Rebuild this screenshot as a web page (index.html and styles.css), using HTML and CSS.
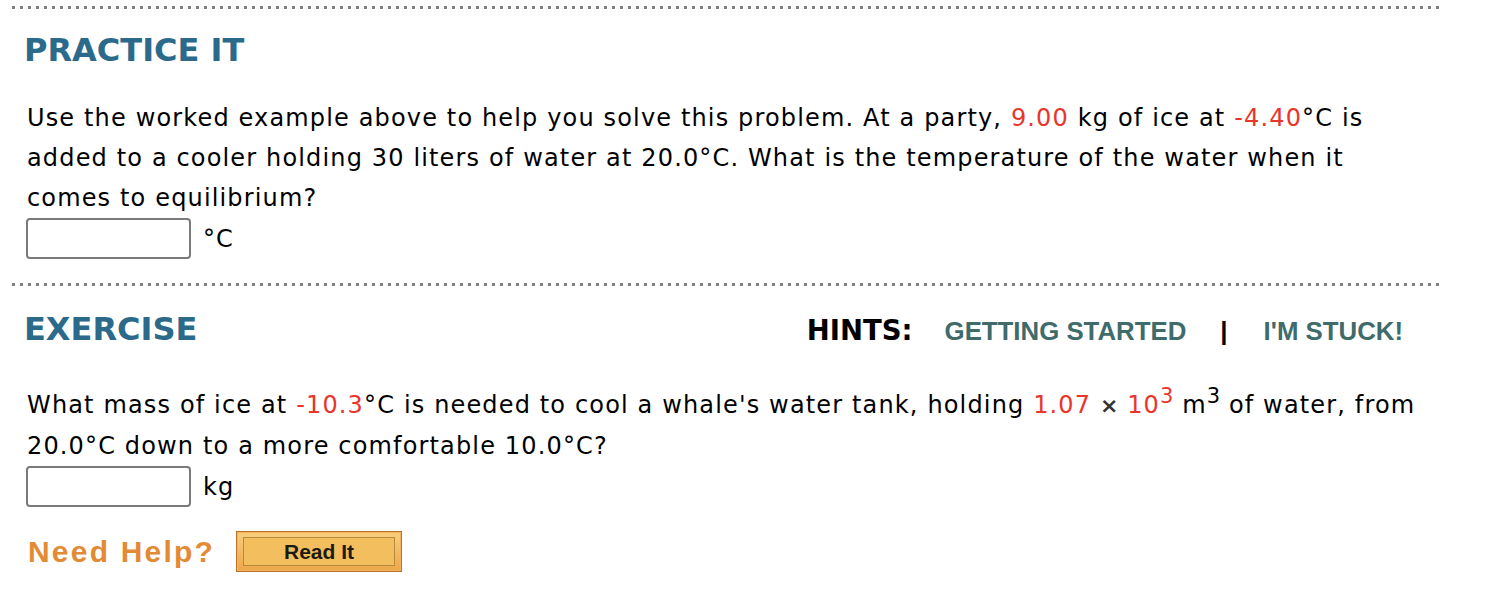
FILE: index.html
```html
<!DOCTYPE html>
<html>
<head>
<meta charset="utf-8">
<link rel="stylesheet" href="styles.css">
</head>
<body>
<div class="page">
  <div class="rule"></div>
  <section class="block practice">
    <h2 class="title">PRACTICE IT</h2>
    <p class="text">Use the worked example above to help you solve this problem. At a party, <span class="red">9.00</span> kg of ice at <span class="red">-4.40</span>°C is added to a cooler holding 30 liters of water at 20.0°C. What is the temperature of the water when it comes to equilibrium?</p>
    <div class="answer"><span class="box"></span><span class="unit">°C</span></div>
  </section>
  <div class="rule"></div>
  <section class="block exercise">
    <div class="head">
      <h2 class="title">EXERCISE</h2>
      <div class="hints">
        <span class="hints-label">HINTS:</span>
        <span class="hint-link">GETTING STARTED</span>
        <span class="sep">|</span>
        <span class="hint-link">I'M STUCK!</span>
      </div>
    </div>
    <p class="text">What mass of ice at <span class="red">-10.3</span>°C is needed to cool a whale's water tank, holding <span class="red">1.07</span> <span class="times">×</span> <span class="red">10<sup>3</sup></span> m<sup>3</sup> of water, from 20.0°C down to a more comfortable 10.0°C?</p>
    <div class="answer"><span class="box"></span><span class="unit">kg</span></div>
    <div class="help">
      <span class="need">Need Help?</span>
      <span class="btn"><span class="btn-inner">Read It</span></span>
    </div>
  </section>
</div>
</body>
</html>
```
FILE: styles.css
```css
* { box-sizing: border-box; }
html, body { margin: 0; padding: 0; background: #fff; }
body { font-family: "DejaVu Sans", Verdana, sans-serif; color: #000; }
.page { width: 1498px; padding-top: 6px; }
.rule {
  margin-left: 12px;
  width: 1432px;
  height: 3px;
  background: repeating-linear-gradient(to right, #808080 0 3px, transparent 3px 8px);
}
.block { padding-left: 24px; width: 1440px; }
.practice { padding-top: 21px; padding-bottom: 24px; }
.exercise { padding-top: 23px; }
.title {
  margin: 0;
  font-family: "DejaVu Sans", Verdana, sans-serif;
  font-weight: bold;
  font-size: 32px;
  line-height: 40px;
  color: #2b6a8a;
}
.text {
  margin: 28px 15px 0 3px;
  font-size: 24px;
  letter-spacing: 1.15px;
  line-height: 40px;
}
.practice .text { margin-top: 28px; }
.exercise .text { margin-top: 36px; }
.red { color: #e8362b; }
.times { color: #333; font-weight: bold; font-size: 22px; letter-spacing: 0; }
sup { font-size: 21px; line-height: 0; vertical-align: 10px; letter-spacing: 0; }
.answer { display: flex; align-items: center; gap: 12px; margin-left: 2px; height: 41px; }
.box {
  width: 165px;
  height: 41px;
  border: 2px solid #7a7a7a;
  border-radius: 4px;
  background: #fff;
}
.unit { font-size: 24px; letter-spacing: 1.1px; }
.head { display: flex; align-items: baseline; justify-content: space-between; padding-right: 37px; }
.hints { display: flex; align-items: baseline; }
.hints-label {
  font-family: "DejaVu Sans", Verdana, sans-serif;
  font-weight: bold;
  font-size: 27.5px;
  margin-right: 32px;
}
.hint-link {
  font-family: "Liberation Sans", Arial, sans-serif;
  font-weight: bold;
  font-size: 25.8px;
  color: #3f6b6b;
}
.sep {
  font-family: "Liberation Sans", Arial, sans-serif;
  font-weight: bold;
  font-size: 26px;
  margin: 0 36px 0 34px;
}
.help { display: flex; align-items: center; margin-top: 24px; margin-left: 4px; gap: 21px; }
.need {
  font-family: "Liberation Sans", Arial, sans-serif;
  font-weight: bold;
  font-size: 30px;
  letter-spacing: 2.2px;
  color: #e38a35;
}
.btn {
  display: flex;
  width: 166px;
  height: 41px;
  padding: 5px 6px;
  background: linear-gradient(#f8cf7c, #eea64a);
  border: 1px solid #b8732c;
  box-shadow: inset 0 0 0 1px #f3b25c;
}
.btn-inner {
  flex: 1;
  display: flex;
  align-items: center;
  justify-content: center;
  background: #f3bf5e;
  border: 1px solid #b88a3c;
  font-family: "Liberation Sans", Arial, sans-serif;
  font-weight: bold;
  font-size: 21px;
  color: #1e1a10;
}
```
